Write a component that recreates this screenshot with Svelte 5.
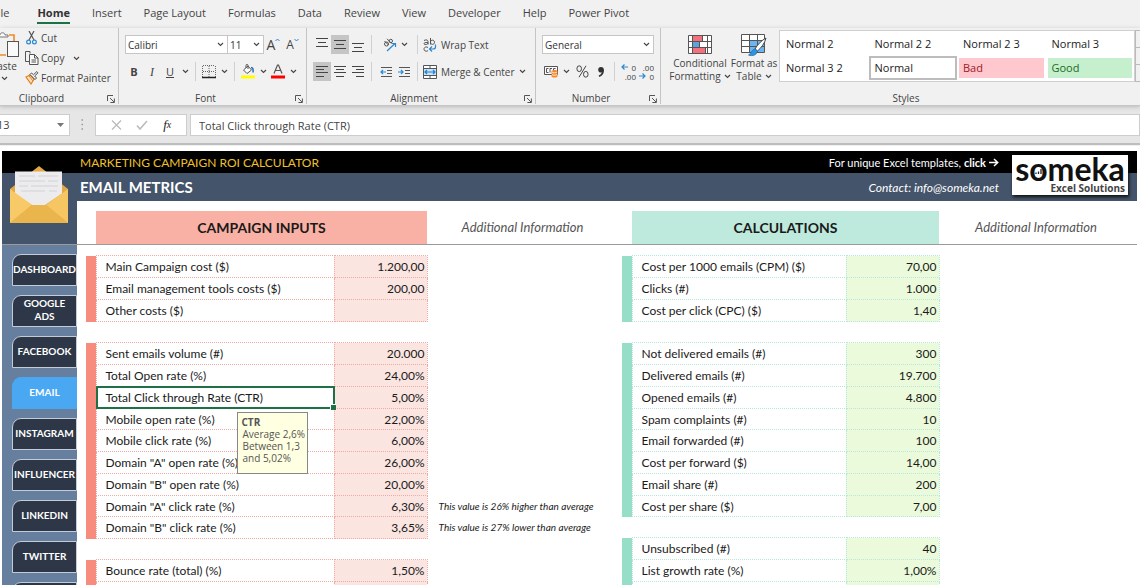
<script>
  const tabs = ['File', 'Home', 'Insert', 'Page Layout', 'Formulas', 'Data', 'Review', 'View', 'Developer', 'Help', 'Power Pivot'];
  const nav = ['DASHBOARD', 'GOOGLE ADS', 'FACEBOOK', 'EMAIL', 'INSTAGRAM', 'INFLUENCER', 'LINKEDIN', 'TWITTER', ''];
  const styles = ['Normal 2', 'Normal 2 2', 'Normal 2 3', 'Normal 3', 'Normal 3 2', 'Normal', 'Bad', 'Good'];

  const inputs = [
    [
      ['Main Campaign cost ($)', '1.200,00'],
      ['Email management tools costs ($)', '200,00'],
      ['Other costs ($)', '']
    ],
    [
      ['Sent emails volume (#)', '20.000'],
      ['Total Open rate (%)', '24,00%'],
      ['Total Click through Rate (CTR)', '5,00%'],
      ['Mobile open rate (%)', '22,00%'],
      ['Mobile click rate (%)', '6,00%'],
      ['Domain "A" open rate (%)', '26,00%'],
      ['Domain "B" open rate (%)', '20,00%'],
      ['Domain "A" click rate (%)', '6,30%', 'This value is 26% higher than average'],
      ['Domain "B" click rate (%)', '3,65%', 'This value is 27% lower than average']
    ],
    [
      ['Bounce rate (total) (%)', '1,50%'],
      ['', '']
    ]
  ];

  const results = [
    [
      ['Cost per 1000 emails (CPM) ($)', '70,00'],
      ['Clicks (#)', '1.000'],
      ['Cost per click (CPC) ($)', '1,40']
    ],
    [
      ['Not delivered emails (#)', '300'],
      ['Delivered emails (#)', '19.700'],
      ['Opened emails (#)', '4.800'],
      ['Spam complaints (#)', '10'],
      ['Email forwarded (#)', '100'],
      ['Cost per forward ($)', '14,00'],
      ['Email share (#)', '200'],
      ['Cost per share ($)', '7,00']
    ],
    [
      ['Unsubscribed (#)', '40'],
      ['List growth rate (%)', '1,00%'],
      ['', '']
    ]
  ];

  const panels = [
    { kind: 'inputs', title: 'CAMPAIGN INPUTS', groups: inputs },
    { kind: 'results', title: 'CALCULATIONS', groups: results }
  ];

  let selected = $state('Total Click through Rate (CTR)');
  let page = $state('EMAIL');
</script>

{#snippet chevron()}
  <svg class="chev" width="7" height="5" viewBox="0 0 7 5"><path d="M1 1l2.5 2.5L6 1" fill="none" stroke="#444" stroke-width="1.1" /></svg>
{/snippet}

{#snippet lines(rows)}
  <svg width="14" height="16" viewBox="0 0 14 16">
    {#each rows as [x, y, w]}
      <path d="M{x} {y}.5h{w}" stroke="#444" stroke-width="1" />
    {/each}
  </svg>
{/snippet}

{#snippet footer(name, launcher)}
  <div class="foot">
    <span>{name}</span>
    {#if launcher}
      <button class="launch" aria-label="{name} settings">
        <svg width="8" height="8" viewBox="0 0 8 8"><path d="M.5 6V.5H6M3 3l4 4M7.4 3.5v4h-4" fill="none" stroke="#555" /></svg>
      </button>
    {/if}
  </div>
{/snippet}

<div class="app">
  <nav class="tabs" aria-label="Ribbon tabs">
    {#each tabs as t}
      <button class:current={t === 'Home'}>{t}</button>
    {/each}
  </nav>

  <div class="ribbon">
    <section class="group clipboard">
      <div class="body">
        <button class="paste">
          <svg width="30" height="26" viewBox="0 0 30 26">
            <path d="M7 3H1v20h16M20 3h5v6" fill="none" stroke="#f08a24" stroke-width="1.6" />
            <path d="M8 5V3h3c0-3 5-3 5 0h3v2z" fill="#fafafa" stroke="#777" />
            <rect x="18.500" y="9.500" width="11" height="15" fill="#fafafa" stroke="#555" />
          </svg>
          <span>Paste</span>
          {@render chevron()}
        </button>
        <div class="stack">
          <button>
            <svg width="14" height="14" viewBox="0 0 14 14">
              <path d="M4 0l5 9M9 0L4 9" fill="none" stroke="#555" stroke-width="1.200" />
              <circle cx="3.600" cy="11" r="1.900" fill="none" stroke="#2b88d0" stroke-width="1.200" />
              <circle cx="9.400" cy="11" r="1.900" fill="none" stroke="#2b88d0" stroke-width="1.200" />
            </svg>
            Cut
          </button>
          <button>
            <svg width="14" height="14" viewBox="0 0 14 14">
              <path d="M5 2.500V.5H.5v10H4" fill="none" stroke="#555" />
              <path d="M4.500 3.500h5l3.500 3.500v6.500H4.500z" fill="#fafafa" stroke="#555" />
              <path d="M9.500 3.500V7H13M6.500 9h4.500M6.500 11h4.500" fill="none" stroke="#555" />
            </svg>
            Copy <i class="sp"></i>{@render chevron()}
          </button>
          <button>
            <svg width="14" height="14" viewBox="0 0 14 14">
              <path d="M1 6l4-2 4 4-3 5z" fill="#fbe3c8" stroke="#e8801c" stroke-width="1.200" />
              <path d="M2 8l3 3M4 5l4 5" stroke="#e8801c" />
              <path d="M5 3.500l5 5 1.500-1.500L9.600 5 13 1.800 11.800.6 8.500 3.800 6.500 2z" fill="#fff" stroke="#444" />
            </svg>
            Format Painter
          </button>
        </div>
      </div>
      {@render footer('Clipboard', true)}
    </section>

    <section class="group font">
      <div class="body rows">
        <div class="row">
          <label class="pick name"><select aria-label="Font"><option>Calibri</option></select>{@render chevron()}</label>
          <label class="pick size"><select aria-label="Font size"><option>11</option></select>{@render chevron()}</label>
          <button class="grow" aria-label="Increase font size">
            <span>A</span><svg width="5" height="4" viewBox="0 0 5 4"><path d="M.5 3l2-2 2 2" fill="none" stroke="#2b88d0" /></svg>
          </button>
          <button class="grow small" aria-label="Decrease font size">
            <span>A</span><svg width="5" height="4" viewBox="0 0 5 4"><path d="M.5 1l2 2 2-2" fill="none" stroke="#2b88d0" /></svg>
          </button>
        </div>
        <div class="row">
          <button class="ico"><b>B</b></button>
          <button class="ico"><em>I</em></button>
          <button class="ico"><u>U</u></button>
          <button class="drop" aria-label="Underline options">{@render chevron()}</button>
          <i class="sep"></i>
          <button class="ico" aria-label="Borders">
            <svg width="14" height="14" viewBox="0 0 14 14">
              <path d="M.5 1v11M13.500 1v11M1 .5h12M7 1v11M1 6.500h12" stroke="#666" stroke-dasharray="1 1" fill="none" />
              <path d="M0 12.500h14" stroke="#222" stroke-width="1.500" />
            </svg>
          </button>
          <button class="drop" aria-label="Border options">{@render chevron()}</button>
          <i class="sep"></i>
          <button class="ico" aria-label="Fill colour">
            <svg width="14" height="15" viewBox="0 0 14 15">
              <path d="M2.500 6l4.500-4 3.500 4-4.500 3.500z" fill="#fff" stroke="#555" />
              <path d="M5 4V1.500c0-1.500 2-1.500 2 0V5" fill="none" stroke="#555" />
              <path d="M10 3.500c2 0 2.500 2 2 5" fill="none" stroke="#2473b5" stroke-width="1.500" />
              <path d="M0 11.500h14v3H0z" fill="#ff0" />
            </svg>
          </button>
          <button class="drop" aria-label="Fill colours">{@render chevron()}</button>
          <button class="ico" aria-label="Font colour">
            <svg width="14" height="15" viewBox="0 0 14 15">
              <path d="M3 9.500L6.500 1h1L11 9.500M4.300 6.500h5.400" fill="none" stroke="#555" stroke-width="1.200" />
              <path d="M0 11.500h14v3H0z" fill="#f00" />
            </svg>
          </button>
          <button class="drop" aria-label="Font colours">{@render chevron()}</button>
        </div>
      </div>
      {@render footer('Font', true)}
    </section>

    <section class="group align">
      <div class="body rows">
        <div class="row">
          <button class="ico" aria-label="Top align">{@render lines([[1, 1, 12], [3, 5, 8], [1, 9, 12]])}</button>
          <button class="ico on" aria-label="Middle align">{@render lines([[1, 3, 12], [3, 7, 8], [1, 11, 12]])}</button>
          <button class="ico" aria-label="Bottom align">{@render lines([[1, 6, 12], [3, 10, 8], [1, 14, 12]])}</button>
          <i class="sep"></i>
          <button class="ico wide" aria-label="Orientation">
            <svg width="14" height="14" viewBox="0 0 14 14">
              <circle cx="3.500" cy="6" r="2" fill="none" stroke="#555" />
              <path d="M1.500 3l4 4M4 .8l4.500 4.500" stroke="#555" fill="none" />
              <circle cx="7.800" cy="3" r="1.700" fill="none" stroke="#555" />
              <path d="M4 13l8-7.500M8.500 5.500H12.500V9" fill="none" stroke="#2b88d0" stroke-width="1.200" />
            </svg>
            {@render chevron()}
          </button>
          <i class="sep"></i>
          <button class="text wrap">
            <svg width="14" height="14" viewBox="0 0 14 14">
              <path d="M1 2.500c3-1.500 4 0 4 1v3M5 4.500c-5-.5-5 2.500-2 2 1 0 2-.8 2-1.500M7.500 0v6.500M7.500 4c0-2.500 4-2.500 4 .3s-4 2.700-4 0M5 9.500c-3-1.500-4 .5-4 1.700s1.500 3 4 1.500" fill="none" stroke="#555" />
              <path d="M12.500 6.500v2.500c0 1.500-1 2-2.500 2H6.500M9 8.500L6.500 11 9 13.500" fill="none" stroke="#2b88d0" stroke-width="1.200" />
            </svg>
            Wrap Text
          </button>
        </div>
        <div class="row">
          <button class="ico on" aria-label="Align left">{@render lines([[1, 2, 12], [1, 5, 8], [1, 8, 12], [1, 12, 8]])}</button>
          <button class="ico" aria-label="Centre">{@render lines([[1, 2, 12], [3, 5, 8], [1, 8, 12], [3, 12, 8]])}</button>
          <button class="ico" aria-label="Align right">{@render lines([[1, 2, 12], [5, 5, 8], [1, 8, 12], [5, 12, 8]])}</button>
          <i class="sep"></i>
          <button class="ico" aria-label="Decrease indent">
            <svg width="13" height="12" viewBox="0 0 13 12">
              <path d="M1 1.500h11M7 4.500h5M7 7.500h5M1 10.500h11" stroke="#555" />
              <path d="M6 6H1M3 4L1 6l2 2" fill="none" stroke="#2b88d0" stroke-width="1.200" />
            </svg>
          </button>
          <button class="ico" aria-label="Increase indent">
            <svg width="13" height="12" viewBox="0 0 13 12">
              <path d="M1 1.500h11M7 4.500h5M7 7.500h5M1 10.500h11" stroke="#555" />
              <path d="M0 6h5M3 4l2 2-2 2" fill="none" stroke="#2b88d0" stroke-width="1.200" />
            </svg>
          </button>
          <i class="sep"></i>
          <button class="text">
            <svg width="14" height="14" viewBox="0 0 14 14">
              <path d="M.5.5h13v13H.5z" fill="#fff" stroke="#555" />
              <path d="M1 3.500h12M1 10.500h12M7 1v2M7 11v2" stroke="#555" />
              <path d="M1 4h12v6H1z" fill="#c9e3f8" />
              <path d="M2 7h10M4 5L2 7l2 2M10 5l2 2-2 2" fill="none" stroke="#1f7fcf" stroke-width="1.200" />
            </svg>
            Merge &amp; Center {@render chevron()}
          </button>
        </div>
      </div>
      {@render footer('Alignment', true)}
    </section>

    <section class="group number">
      <div class="body rows">
        <div class="row">
          <label class="pick format"><select aria-label="Number format"><option>General</option></select>{@render chevron()}</label>
        </div>
        <div class="row">
          <button class="ico" aria-label="Accounting format">
            <svg width="15" height="13" viewBox="0 0 15 13">
              <path d="M.5 1.500h13v8H.5z" fill="#fafafa" stroke="#555" />
              <path d="M4.500 3.500h-2v4h2M8 3.500H6v4M11.500 3.500H9.500v3" fill="none" stroke="#555" />
              <path d="M7.500 6.500c0-2 6-2 6 0v4.500c0 2-6 2-6 0z" fill="#f5882a" />
              <path d="M8 7c1 1 4 1 5 0M8 9.500c1 1 4 1 5 0" fill="none" stroke="#fff" stroke-width=".8" />
            </svg>
          </button>
          <button class="drop" aria-label="Currencies">{@render chevron()}</button>
          <button class="ico pct" aria-label="Percent">
            <svg width="13" height="13" viewBox="0 0 13 13">
              <ellipse cx="3.200" cy="3.700" rx="2.300" ry="2.900" fill="none" stroke="#444" />
              <ellipse cx="9.800" cy="9.300" rx="2.300" ry="2.900" fill="none" stroke="#444" />
              <path d="M10 .8L3 12.200" stroke="#444" />
            </svg>
          </button>
          <button class="ico" aria-label="Comma style">
            <svg width="8" height="12" viewBox="0 0 8 12">
              <circle cx="4" cy="3.800" r="2.800" fill="#333" />
              <path d="M6 3.500C6.500 7 5 9 2 10.300" fill="none" stroke="#333" stroke-width="1.600" />
            </svg>
          </button>
          <i class="sep"></i>
          <button class="ico dec" aria-label="Increase decimal">
            <span>0</span><span>.00</span>
            <svg width="7" height="6" viewBox="0 0 7 6"><path d="M7 3H1M3.500.5L1 3l2.500 2.500" fill="none" stroke="#2b88d0" stroke-width="1.200" /></svg>
          </button>
          <button class="ico dec right" aria-label="Decrease decimal">
            <span>.00</span><span>0</span>
            <svg width="7" height="6" viewBox="0 0 7 6"><path d="M0 3h6M3.500.5L6 3 3.500 5.500" fill="none" stroke="#2b88d0" stroke-width="1.200" /></svg>
          </button>
        </div>
      </div>
      {@render footer('Number', true)}
    </section>

    <section class="group styles">
      <div class="body">
        <button class="big cond">
          <svg width="24" height="20" viewBox="0 0 24 20">
            <path d="M.5.5h23v18H.5z" fill="#fff" />
            <path d="M5 1h9v5H5zM5 13h12v5H5z" fill="#f4707a" />
            <path d="M5 7h6v5H5z" fill="#5ea2e0" />
            <path d="M.5.5h23v18H.5zM.5 6.500h23M.5 12.500h23M4.500.5v18M14.500.5v6M17.500 12v6M11.500 6v6M19.500.5v18" fill="none" stroke="#555" />
          </svg>
          <span>Conditional</span>
          <span>Formatting {@render chevron()}</span>
        </button>
        <button class="big">
          <svg width="26" height="24" viewBox="0 0 26 24">
            <path d="M.5 1.500h23v18H.5z" fill="#fff" />
            <path d="M8 7h15v12H8z" fill="#6db4f0" />
            <path d="M.5 1.500h23v18H.5zM.5 7.500h23M.5 13.500h23M8.500 1.500v18M16.500 1.500v18" fill="none" stroke="#555" />
            <path d="M25 5c-4 2-9 7-11 11l2.500 2C20 15 24 10 25 5z" fill="#fff" stroke="#444" />
            <path d="M14 16c-3 0-3 4-6.500 6 4 1.500 8.500 0 9-4z" fill="#2f93e0" stroke="#1f6fb0" stroke-width=".8" />
          </svg>
          <span>Format as</span>
          <span>Table {@render chevron()}</span>
        </button>
        <div class="gallery">
          {#each styles as s}
            <button class={s.toLowerCase().replaceAll(' ', '-')}>{s}</button>
          {/each}
        </div>
        <div class="scroll">
          <button aria-label="Previous styles">{@render chevron()}</button>
          <button aria-label="Next styles">{@render chevron()}</button>
          <button aria-label="All styles">{@render chevron()}</button>
        </div>
      </div>
      {@render footer('Styles', false)}
    </section>
  </div>

  <div class="formula">
    <label class="cellname">
      <input aria-label="Name box" value="C13" />
      <svg width="7" height="4" viewBox="0 0 7 4"><path d="M0 0h7L3.500 4z" fill="#777" /></svg>
    </label>
    <svg class="dots" width="3" height="12" viewBox="0 0 3 12"><path d="M.5 1h1.500M.5 5.500h1.500M.5 10h1.500" stroke="#999" stroke-width="1.500" /></svg>
    <div class="fx">
      <button aria-label="Cancel"><svg width="11" height="10" viewBox="0 0 11 10"><path d="M1 .5l9 9M10 .5l-9 9" stroke="#bbb" stroke-width="1.300" /></svg></button>
      <button aria-label="Enter"><svg width="12" height="10" viewBox="0 0 12 10"><path d="M1 5.500l3 3.500 7-8" fill="none" stroke="#bbb" stroke-width="1.600" /></svg></button>
      <button class="fn">f<small>x</small></button>
    </div>
    <input class="entry" aria-label="Formula bar" value={selected} />
  </div>

  <main class="sheet">
    <header class="banner">
      <div class="top">
        <span>MARKETING CAMPAIGN ROI CALCULATOR</span>
        <a href="#templates">For unique Excel templates, <b>click</b>
          <svg width="10" height="9" viewBox="0 0 10 9"><path d="M0 4.500h8.500M5 1l3.700 3.500L5 8" fill="none" stroke="#fff" stroke-width="1.500" /></svg>
        </a>
      </div>
      <div class="sub">
        <h1>EMAIL METRICS</h1>
        <a href="#contact">Contact: info@someka.net</a>
      </div>
      <svg class="mail" width="58" height="58" viewBox="0 0 58 58">
        <path d="M0 23L29 0l29 23v34H0z" fill="#e3a942" />
        <path d="M5 5.500h47v22L35 39H22L5 27.500z" fill="#ececee" />
        <path d="M9 10h16M28 10h20M9 15h26M38 15h10M9 20h9M21 20h27M11 25h24M39 25h8" stroke="#d2d2d6" />
        <path d="M0 23l22 16L0 57z" fill="#f7ca67" />
        <path d="M58 23L36 39l22 18z" fill="#f5c661" />
        <path d="M0 57l22-18h14l22 18z" fill="#eab54c" />
      </svg>
      <div class="logo">
        <div class="word">s<span class="o">o<svg width="8" height="7" viewBox="0 0 8 7"><path d="M1 6V4.500M3.500 6V3.500M6 6V1" stroke="#222" stroke-width="1.300" /></svg></span>meka</div>
        <div class="tag">Excel Solutions</div>
      </div>
    </header>

    <div class="work">
      <aside>
        <div class="cap"></div>
        {#each nav as n}
          <button class:here={n === page} aria-label={n || 'More'} onclick={() => (page = n)}>{n}</button>
        {/each}
      </aside>
      <div class="panels">
        {#each panels as p}
          <section class="panel {p.kind}">
            <div class="head">
              <h2>{p.title}</h2>
              <span>Additional Information</span>
            </div>
            {#each p.groups as g}
              <table>
                <colgroup><col class="c-strip" /><col /><col class="c-value" /><col class="c-info" /></colgroup>
                <tbody>
                  {#each g as [label, value, note], i}
                    <tr>
                      {#if i === 0}<td class="strip" rowspan={g.length}></td>{/if}
                      <th scope="row" class:sel={label && label === selected} onclick={() => (selected = label)}>
                        {label}
                        {#if label === 'Total Click through Rate (CTR)'}
                          <div class="tip"><b>CTR</b><p>Average 2,6% Between 1,3 and 5,02%</p></div>
                        {/if}
                      </th>
                      <td class="value">{value}</td>
                      <td class="note">{note ?? ''}</td>
                    </tr>
                  {/each}
                </tbody>
              </table>
            {/each}
          </section>
        {/each}
      </div>
    </div>
  </main>
</div>

<style>
  :global(body) { overflow: hidden; }
  .app {
    --ui: "Open Sans", "Noto Sans", sans-serif;
    --cell: Lato, "Open Sans", sans-serif;
    height: 100vh;
    overflow: hidden;
    display: flex;
    flex-direction: column;
    background: #e6e6e6;
    color: #444;
    font: 11px/14px var(--ui);
  }
  .app * { box-sizing: border-box; }
  button, select, input {
    font: inherit;
    color: inherit;
    background: none;
    border: 0;
    padding: 0;
    margin: 0;
    border-radius: 0;
  }
  button { display: flex; align-items: center; justify-content: center; white-space: nowrap; }
  svg { flex: none; display: block; }

  .tabs {
    display: flex;
    gap: 22px;
    height: 28px;
    flex: none;
    background: #f1f1f1;
    margin-left: -8px;
    padding-top: 3px;
  }
  .tabs button { height: 21px; border-bottom: 2px solid transparent; }
  .tabs button:first-child { margin-right: 6px; }
  .tabs .current { font-weight: 700; border-color: #1e7145; color: #333; }

  .ribbon {
    display: flex;
    flex: none;
    height: 78px;
    background: #f1f1f1;
    border-bottom: 1px solid #c6c6c6;
    box-shadow: 0 1px 4px #bbb;
    position: relative;
  }
  .group {
    display: flex;
    flex-direction: column;
    flex: none;
    height: 76px;
    border-right: 1px solid #c4c4c4;
  }
  .body { display: flex; height: 63px; flex: none; }
  .foot { position: relative; text-align: center; font-size: 10px; line-height: 12px; padding: 1px 20px 0 0; }
  .launch { position: absolute; right: 3px; top: 4px; }
  .clipboard { width: 119px; }
  .clipboard .foot { padding-right: 35px; }
  .font { width: 188px; padding-left: 6px; }
  .align { width: 229px; padding-left: 6px; }
  .number { width: 125px; padding-left: 6px; }
  .styles { flex: 1; margin-right: -12px; border: 0; padding-left: 7px; }
  .styles .foot { padding-right: 8px; }

  .paste { flex-direction: column; width: 30px; margin-left: -11px; justify-content: flex-start; padding-top: 4px; font-size: 10px; }
  .paste span { margin: 1px 0 3px; }
  .stack { display: flex; flex-direction: column; margin-left: 6px; }
  .stack button { height: 20px; gap: 2px; justify-content: flex-start; font-size: 10px; }
  .sp { width: 5px; }

  .rows { flex-direction: column; gap: 8px; padding-top: 7px; }
  .row { display: flex; align-items: center; height: 19px; }
  .pick { display: flex; align-items: center; background: #fff; border: 1px solid #c6c6c6; height: 19px; padding: 0 3px 0 2px; font-size: 10px; color: #333; }
  .pick + .pick { margin-left: -1px; }
  .pick select { appearance: none; flex: 1; min-width: 0; outline: 0; }
  .name { width: 103px; }
  .size { width: 37px; }
  .format { width: 112px; }
  .grow { width: 19px; align-items: flex-start; font-size: 14px; line-height: 18px; }
  .grow.small { font-size: 12px; }
  .grow svg { margin-top: 2px; }
  .ico { width: 18px; height: 19px; flex: none; }
  .ico.wide { width: 36px; gap: 4px; }
  .ico em { font-family: "Liberation Serif", serif; font-size: 12px; }
  .on { background: #c5c5c5; }
  .drop { width: 12px; height: 19px; }
  .sep { width: 1px; height: 19px; background: #d0d0d0; margin: 0 5px 0 4px; flex: none; }
  .font .sep { margin-right: 4px; }
  .text { gap: 4px; font-size: 10px; }
  .pct { margin: 0 1px; }
  .dec { position: relative; flex-direction: column; align-items: flex-end; font-size: 8px; line-height: 9px; padding-right: 2px; }
  .dec svg { position: absolute; left: 1px; top: 2px; }
  .dec.right svg { top: 11px; }

  .big { flex-direction: column; justify-content: flex-start; width: 44px; padding-top: 5px; font-size: 10px; line-height: 13px; }
  .big.cond { width: 64px; }
  .big svg { height: 24px; }
  .big span { display: flex; gap: 3px; align-items: center; }
  .big span .chev { height: 5px; }
  .gallery {
    flex: 1;
    display: grid;
    grid-template-columns: repeat(4, 1fr);
    grid-template-rows: 25px 24px;
    background: #fff;
    border: 1px solid #cfcfcf;
    margin: 2px 0 0 3px;
    height: 52px;
    font-size: 11px;
    color: #222;
  }
  .gallery button { justify-content: flex-start; padding-left: 4px; margin: 2px; }
  .gallery button.normal { border: 2px solid #bcbcbc; margin: 0; }
  .bad { background: #ffc7ce; color: #9c1a22; }
  .good { background: #c6efce; color: #1a6b22; }
  .scroll { width: 17px; margin-top: 2px; height: 52px; display: grid; border: 1px solid #bbb; }
  .scroll button + button { border-top: 1px solid #bbb; }

  .formula { display: flex; flex: none; align-items: center; height: 39px; padding-top: 1px; border-bottom: 2px solid #bdbdbd; }
  .cellname { width: 70px; height: 22px; background: #fff; border: 1px solid #cdcdcd; border-left: 0; display: flex; align-items: center; padding-right: 5px; }
  .cellname input { width: 40px; flex: none; margin: 0 auto 0 -10px; }
  .dots { margin: 0 11px; }
  .fx { width: 92px; height: 22px; background: #fff; border: 1px solid #cdcdcd; display: flex; align-items: center; justify-content: space-evenly; }
  .fn { font: italic 13px/16px "Liberation Serif", serif; color: #222; }
  .fn small { font-size: 10px; align-self: flex-end; }
  .entry { flex: 1; min-width: 0; height: 22px; background: #fff; border: 1px solid #cdcdcd; margin-left: 3px; padding-left: 8px; outline: 0; }

  .sheet {
    flex: 1;
    min-height: 0;
    background: #fff;
    padding: 5px 3px 0 2px;
    font: 12px/15px var(--cell);
    color: #1a1a1a;
    display: flex;
    flex-direction: column;
    border-top: 1px solid #f0f0f0;
  }
  .banner { position: relative; flex: none; color: #fff; }
  .banner a { color: #fff; text-decoration: none; display: flex; align-items: center; gap: 3px; }
  .top, .sub { display: flex; align-items: center; justify-content: space-between; padding: 0 138px 0 78px; }
  .top { background: #000; height: 22px; }
  .top span { color: #f0c02c; }
  .top a { font-size: 11px; }
  .sub { background: #44546a; height: 28px; }
  .sub a { font-style: italic; }
  h1 { margin: 0; font-size: 15px; line-height: 20px; }
  .mail { position: absolute; left: 8px; top: 15px; }
  .logo { position: absolute; right: 9px; top: 4px; width: 116px; height: 40px; background: #fff; color: #111; box-shadow: 1px 2px 3px #111; padding: 0 3px; text-align: right; }
  .word { font: 700 32px/28px Lato, sans-serif; height: 28px; text-align: center; }
  .o { position: relative; }
  .o svg { position: absolute; left: 6px; top: 19px; }
  .tag { font: 700 10px/10px var(--ui); color: #444; }

  .work { flex: 1; display: flex; min-height: 0; }
  aside { width: 75px; flex: none; background: #667f9f; display: flex; flex-direction: column; align-items: flex-end; gap: 9px; }
  .cap { width: 100%; height: 44px; flex: none; background: #44546a; border-bottom: 1px solid #9a9a9a; }
  aside button {
    width: 65px;
    height: 32px;
    flex: none;
    white-space: normal;
    background: #2d3747;
    color: #fff;
    border: 1px solid #c4ccd8;
    border-radius: 9px 0 0 0;
    font: 700 10px/13px var(--cell);
    padding-bottom: 2px;
  }
  aside .here { background: #4aa8f2; border-color: #4aa8f2; }

  .panels { flex: 1; display: grid; grid-template-columns: 545fr 515fr; align-content: start; min-width: 0; }
  .inputs { --strip: #f78c7e; --line: #f2aaa2; --fill: #fbe5e1; --title: #f9b1a5; --info: 195px; padding-left: 9px; }
  .results { --strip: #97dec9; --line: #b3e8da; --fill: #eafadb; --title: #bdeadd; --info: 198px; }
  .head {
    position: relative;
    display: grid;
    grid-template-columns: minmax(0, 1fr) var(--info);
    align-items: center;
    text-align: center;
    height: 44px;
    padding: 10px 0 0 10px;
    margin-bottom: 10px;
    border-bottom: 1px solid #9a9a9a;
  }
  .inputs .head { margin-left: -9px; padding-left: 19px; }
  h2 { margin: 0; background: var(--title); font-size: 14px; line-height: 33px; }
  .head span { font-size: 13px; font-style: italic; color: #555; padding-right: 4px; }
  table { border-collapse: collapse; table-layout: fixed; width: 100%; margin-bottom: 20px; }
  .c-strip { width: 10px; }
  .c-value { width: 93px; }
  .c-info { width: var(--info); }
  tr { height: 22px; }
  tr:nth-child(4n) { height: 21px; }
  th, td { padding: 0; font-weight: 400; white-space: nowrap; }
  .strip { background: var(--strip); }
  th, .value { border: 1px dotted var(--line); }
  th { position: relative; text-align: left; padding-left: 9px; }
  .value { background: var(--fill); text-align: right; padding-right: 2px; }
  .note { font-size: 10px; font-style: italic; padding-left: 11px; }
  .sel::before { content: ""; position: absolute; inset: -1px; border: 2px solid #1f7145; }
  .sel::after { content: ""; position: absolute; right: -2px; bottom: -2px; width: 5px; height: 5px; background: #1f7145; border: 1px solid #fff; border-width: 1px 0 0 1px; }
  .tip {
    position: absolute;
    z-index: 2;
    left: 140px;
    top: 25px;
    width: 71px;
    height: 62px;
    background: #ffffe1;
    border: 1px solid #888;
    padding: 3px 0 0 4px;
    font: 10px/12px var(--ui);
    color: #555;
    white-space: normal;
  }
  .tip p { margin: 0 0 0 1px; }
</style>
